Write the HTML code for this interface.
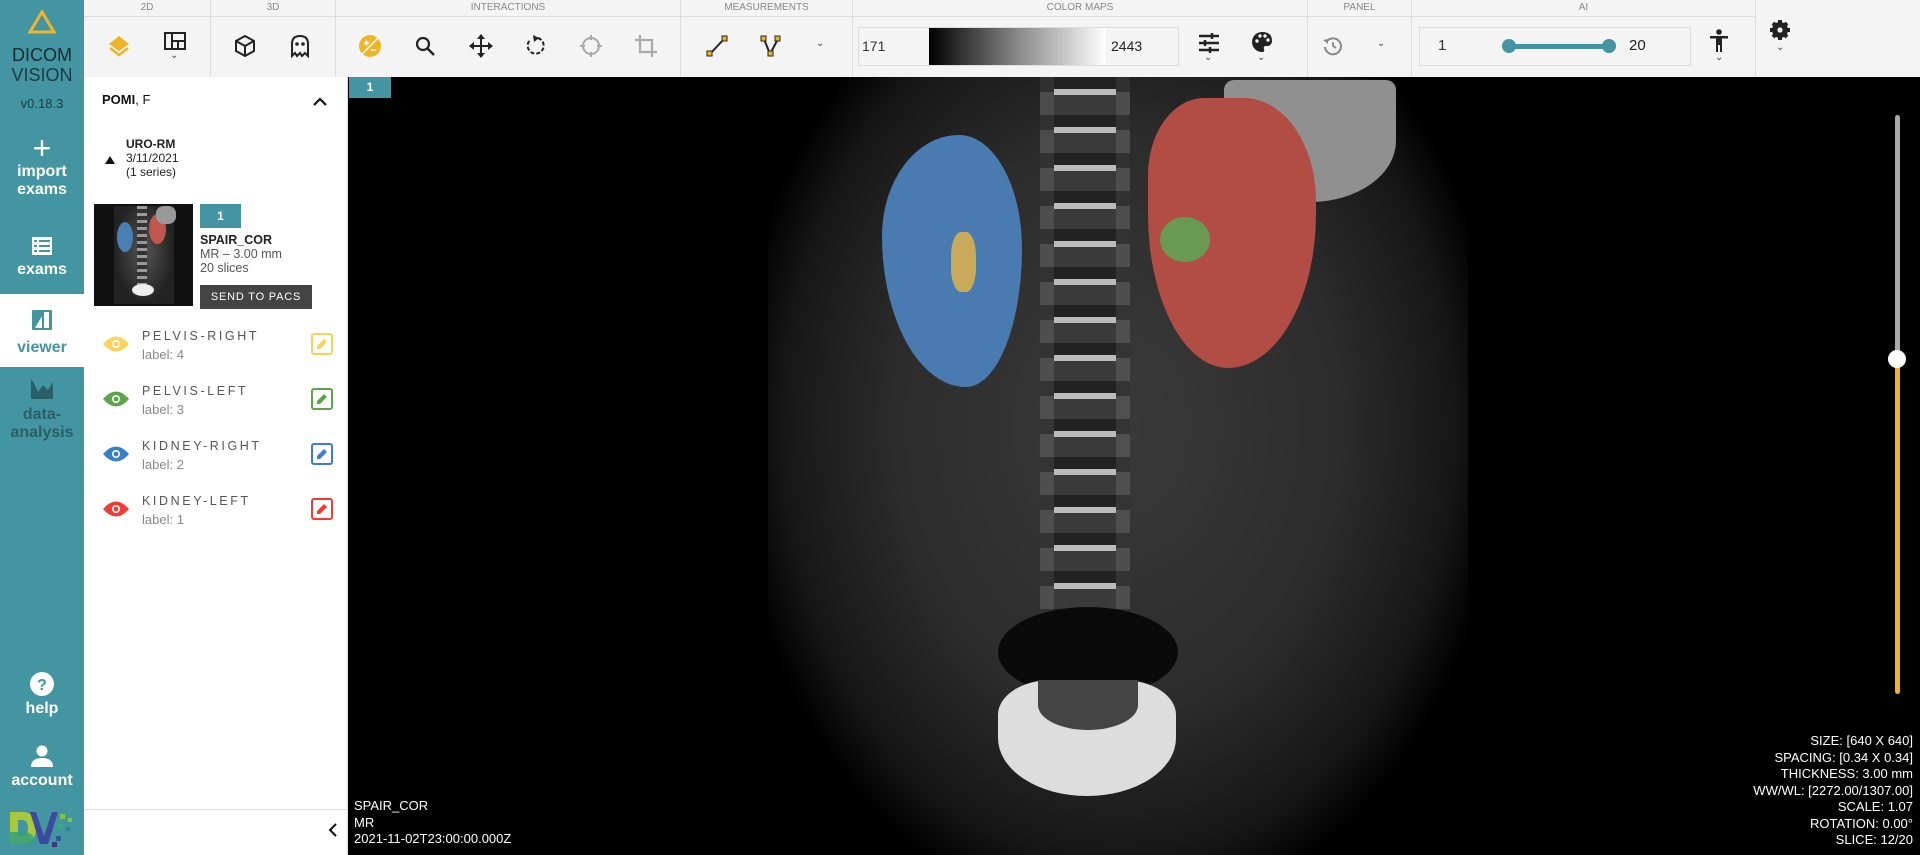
<!DOCTYPE html>
<html><head><meta charset="utf-8"><style>
*{margin:0;padding:0;box-sizing:border-box}
body{width:1920px;height:855px;overflow:hidden;background:#000;font-family:"Liberation Sans",sans-serif;position:relative}
.abs{position:absolute}
#nav{left:0;top:0;width:84px;height:855px;background:#4395a1;color:#fff;text-align:center}
.nt{position:absolute;left:0;width:84px;font-weight:bold;font-size:16px;text-align:center;line-height:18px}
#tb{left:84px;top:0;width:1836px;height:77px;background:#f4f4f4}
.grp{position:absolute;top:0;height:77px;border-right:1px solid #ddd}
.gl{position:absolute;top:0;left:0;right:0;height:17px;border-bottom:1px solid #ddd;font-size:10px;color:#888;text-align:center;line-height:15px}
.chev{position:absolute;font-size:10px;color:#444}
#panel{left:84px;top:77px;width:264px;height:778px;background:#fff;border-right:1px solid #ddd}
.lbl{position:absolute;left:0;width:264px;height:55px}
.lbl .nm{position:absolute;left:58px;top:0;font-size:12.5px;letter-spacing:2.6px;color:#555}
.lbl .sb{position:absolute;left:58px;top:18px;font-size:13px;color:#888}
.ov{color:#fff;font-size:13px;line-height:16.5px}
</style></head><body>

<div id="nav" class="abs">
<svg class="abs" style="left:28px;top:10px" width="28" height="24"><path d="M14 2 L26 22 L2 22 Z" fill="none" stroke="#f0b429" stroke-width="3"/></svg>
<div class="abs" style="left:0;width:84px;top:45px;font-size:18px;color:#1b2a30;line-height:20px">DICOM<br><span style="color:#1b3c44">VISION</span></div>
<div class="abs" style="left:0;width:84px;top:96px;font-size:13px;color:#1b3c44">v0.18.3</div>
<div class="abs" style="left:0;width:84px;top:132px;font-size:32px;line-height:32px">+</div>
<div class="nt" style="top:163px">import<br>exams</div>
<svg class="abs" style="left:31px;top:236px" width="22" height="20"><rect x="1" y="1" width="20" height="18" fill="#fff"/><g fill="#4395a1"><rect x="3" y="4" width="3" height="2"/><rect x="8" y="4" width="11" height="2"/><rect x="3" y="9" width="3" height="2"/><rect x="8" y="9" width="11" height="2"/><rect x="3" y="14" width="3" height="2"/><rect x="8" y="14" width="11" height="2"/></g></svg>
<div class="nt" style="top:261px">exams</div>
<div class="abs" style="left:0;top:294px;width:84px;height:73px;background:#fff"></div>
<svg class="abs" style="left:31px;top:309px" width="22" height="22"><rect x="1" y="1" width="20" height="20" rx="1" fill="#4395a1"/><rect x="13" y="3" width="5" height="16" fill="#fff"/><path d="M4 19 L11 7 L11 19Z" fill="#fff"/></svg>
<div class="nt" style="top:339px;color:#4395a1">viewer</div>
<svg class="abs" style="left:30px;top:378px" width="24" height="22"><path d="M1 1 L1 21 L23 21 L23 4 L18 12 L13 7 L8 14 L4 5 Z" fill="#2a5f6a"/></svg>
<div class="nt" style="top:406px;color:#2a5f6a">data-<br>analysis</div>
<svg class="abs" style="left:30px;top:672px" width="24" height="24"><circle cx="12" cy="12" r="12" fill="#fff"/><text x="12" y="18" font-size="16" font-weight="bold" text-anchor="middle" fill="#4395a1" font-family="Liberation Sans">?</text></svg>
<div class="nt" style="top:700px">help</div>
<svg class="abs" style="left:31px;top:745px" width="22" height="22"><circle cx="11" cy="6" r="5.5" fill="#fff"/><path d="M0 22 Q0 13 11 13 Q22 13 22 22Z" fill="#fff"/></svg>
<div class="nt" style="top:772px">account</div>
<svg class="abs" style="left:8px;top:810px" width="70" height="40"><path d="M2 2 H14 Q28 2 28 18 Q28 34 14 34 H2Z M10 10 V26 H14 Q20 26 20 18 Q20 10 14 10Z" fill="#a7c93a" fill-rule="evenodd"/><path d="M2 22 H14 Q28 22 26 34 H2Z" fill="#2e9e7d" opacity=".8"/><path d="M28 2 L36 26 L44 2 H50 L40 34 H32 L22 2Z" fill="#3b4a9c"/><g fill="#7fc34a"><rect x="52" y="4" width="5" height="5"/><rect x="60" y="8" width="4" height="4"/><rect x="50" y="14" width="5" height="5" fill="#3aa98a"/><rect x="58" y="17" width="4" height="4" fill="#2b8a8a"/><rect x="48" y="26" width="5" height="5" fill="#2b5c8a"/><rect x="44" y="32" width="5" height="5" fill="#3b3a7c"/></g></svg>
</div>

<div id="tb" class="abs">
<div class="grp" style="left:0;width:127px"><div class="gl">2D</div></div>
<div class="grp" style="left:127px;width:125px"><div class="gl">3D</div></div>
<div class="grp" style="left:252px;width:345px"><div class="gl">INTERACTIONS</div></div>
<div class="grp" style="left:597px;width:172px"><div class="gl">MEASUREMENTS</div></div>
<div class="grp" style="left:769px;width:455px"><div class="gl">COLOR MAPS</div></div>
<div class="grp" style="left:1224px;width:104px"><div class="gl">PANEL</div></div>
<div class="grp" style="left:1328px;width:344px"><div class="gl">AI</div></div>
</div>
<svg class="abs" style="left:107px;top:34px" width="24" height="24"><path d="M12 2 L22 10 L12 17 L2 10Z" fill="#f0b429"/><path d="M3 14 L12 21 L21 14" fill="none" stroke="#f0b429" stroke-width="2.5"/></svg>
<svg class="abs" style="left:164px;top:32px" width="22" height="18"><rect x="1" y="1" width="20" height="16" fill="none" stroke="#222" stroke-width="2"/><path d="M8 1V17 M8 9H21 M14 9V17" stroke="#222" stroke-width="2"/></svg>
<div class="chev" style="left:170px;top:50px">&#8964;</div>
<svg class="abs" style="left:234px;top:34px" width="22" height="24"><path d="M11 2 L20 7 V17 L11 22 L2 17 V7Z M2 7 L11 12 L20 7 M11 12 V22" fill="none" stroke="#222" stroke-width="2"/></svg>
<svg class="abs" style="left:289px;top:34px" width="22" height="24"><path d="M3 22 V10 Q3 2 11 2 Q19 2 19 10 V22 L16 19 L13 22 L11 19 L8 22 L6 19Z" fill="none" stroke="#222" stroke-width="2"/><circle cx="8" cy="10" r="1.8" fill="#222"/><circle cx="14" cy="10" r="1.8" fill="#222"/></svg>
<svg class="abs" style="left:358px;top:34px" width="24" height="24"><circle cx="12" cy="12" r="11" fill="#f0b429"/><path d="M4 20 L20 4" stroke="#fff" stroke-width="1.5"/><path d="M6 9h5M8.5 6.5v5M13 16h5" stroke="#fff" stroke-width="1.5"/></svg>
<svg class="abs" style="left:414px;top:35px" width="22" height="22"><circle cx="9" cy="9" r="6" fill="none" stroke="#222" stroke-width="2.2"/><path d="M13 13 L20 20" stroke="#222" stroke-width="2.5"/></svg>
<svg class="abs" style="left:469px;top:34px" width="24" height="24"><path d="M12 1V23 M1 12H23" stroke="#222" stroke-width="2"/><path d="M12 0 L8 5H16Z M12 24 L8 19H16Z M0 12 L5 8V16Z M24 12 L19 8V16Z" fill="#222"/></svg>
<svg class="abs" style="left:524px;top:34px" width="22" height="24"><path d="M14 4 A8 8 0 1 1 6 6" fill="none" stroke="#222" stroke-width="2" stroke-dasharray="4 2"/><path d="M9 1 L15 4 L10 8Z" fill="#222"/></svg>
<svg class="abs" style="left:579px;top:34px" width="24" height="24"><circle cx="12" cy="12" r="8" fill="none" stroke="#aaa" stroke-width="2"/><path d="M12 1V6M12 18V23M1 12H6M18 12H23" stroke="#aaa" stroke-width="2"/></svg>
<svg class="abs" style="left:634px;top:34px" width="24" height="24"><path d="M6 1V18H23 M1 6H18V23" fill="none" stroke="#aaa" stroke-width="2.2"/></svg>
<svg class="abs" style="left:706px;top:35px" width="22" height="22"><path d="M4 19 L18 4" stroke="#222" stroke-width="2"/><rect x="1" y="16" width="5" height="5" fill="#f0b429" stroke="#222"/><rect x="16" y="1" width="5" height="5" fill="#f0b429" stroke="#222"/></svg>
<svg class="abs" style="left:760px;top:35px" width="22" height="22"><path d="M4 4 L10 19 L18 4" fill="none" stroke="#222" stroke-width="2"/><rect x="1" y="1" width="5" height="5" fill="#f0b429" stroke="#222"/><rect x="8" y="16" width="5" height="5" fill="#f0b429" stroke="#222"/><rect x="15" y="1" width="5" height="5" fill="#f0b429" stroke="#222"/></svg>
<div class="chev" style="left:816px;top:38px">&#8964;</div>
<div class="abs" style="left:858px;top:27px;width:321px;height:39px;border:1px solid #ddd;background:#f4f4f4"></div>
<div class="abs" style="left:929px;top:28px;width:177px;height:37px;background:linear-gradient(90deg,#000,#888 50%,#fff)"></div>
<div class="abs" style="left:862px;top:38px;font-size:14px;color:#333">171</div>
<div class="abs" style="left:1111px;top:38px;font-size:14px;color:#222">2443</div>
<svg class="abs" style="left:1198px;top:33px" width="22" height="20"><path d="M1 3H21M1 10H21M1 17H21" stroke="#222" stroke-width="2.5"/><path d="M14 0V6M7 7V13M12 14V20" stroke="#222" stroke-width="2.5"/></svg>
<div class="chev" style="left:1204px;top:52px">&#8964;</div>
<svg class="abs" style="left:1251px;top:31px" width="22" height="22"><path d="M11 1 A10 10 0 0 0 11 21 Q14 21 13 18 Q12 15 15 15 H17 A5 5 0 0 0 21 10 Q21 1 11 1Z" fill="#222"/><circle cx="6" cy="10" r="1.7" fill="#f4f4f4"/><circle cx="9" cy="5" r="1.7" fill="#f4f4f4"/><circle cx="14" cy="5" r="1.7" fill="#f4f4f4"/><circle cx="17" cy="9" r="1.7" fill="#f4f4f4"/></svg>
<div class="chev" style="left:1257px;top:52px">&#8964;</div>
<svg class="abs" style="left:1322px;top:35px" width="22" height="22"><path d="M5 6 A8 8 0 1 1 3 12" fill="none" stroke="#888" stroke-width="2"/><path d="M1 5 L6 4 L6 9Z" fill="#888"/><path d="M11 7V11L14 13" stroke="#888" stroke-width="1.8" fill="none"/></svg>
<div class="chev" style="left:1377px;top:38px">&#8964;</div>
<div class="abs" style="left:1419px;top:27px;width:272px;height:39px;border:1px solid #ddd;background:#f4f4f4"></div>
<div class="abs" style="left:1438px;top:37px;font-size:15px;color:#333">1</div>
<div class="abs" style="left:1512px;top:44px;width:95px;height:5px;background:#4395a1"></div>
<div class="abs" style="left:1502px;top:39px;width:14px;height:14px;border-radius:50%;background:#4395a1"></div>
<div class="abs" style="left:1602px;top:39px;width:14px;height:14px;border-radius:50%;background:#4395a1"></div>
<div class="abs" style="left:1629px;top:37px;font-size:15px;color:#222">20</div>
<svg class="abs" style="left:1709px;top:29px" width="20" height="24"><circle cx="10" cy="3" r="2.8" fill="#222"/><path d="M1 7H19V9.5H13V23H11V16H9V23H7V9.5H1Z" fill="#222"/></svg>
<div class="chev" style="left:1715px;top:52px">&#8964;</div>
<svg class="abs" style="left:1770px;top:20px" width="20" height="20"><circle cx="10" cy="10" r="6" fill="none" stroke="#222" stroke-width="4"/><g stroke="#222" stroke-width="4"><path d="M10 0V20M0 10H20M3 3L17 17M17 3L3 17"/></g><circle cx="10" cy="10" r="2.6" fill="#f4f4f4"/></svg>
<div class="chev" style="left:1776px;top:42px">&#8964;</div>

<div id="panel" class="abs">
<div class="abs" style="left:18px;top:15px;font-size:13px;color:#111"><b>POMI</b>, F</div>
<svg class="abs" style="left:228px;top:20px" width="16" height="10"><path d="M2 8 L8 2 L14 8" fill="none" stroke="#111" stroke-width="2.2"/></svg>
<svg class="abs" style="left:21px;top:79px" width="10" height="8"><path d="M5 0 L10 8 H0Z" fill="#111"/></svg>
<div class="abs" style="left:42px;top:60px;font-size:12px;color:#222;line-height:14px"><b>URO-RM</b><br>3/11/2021<br>(1 series)</div>
<div class="abs" style="left:10px;top:127px;width:99px;height:102px;background:#111;overflow:hidden">
 <div class="abs" style="left:20px;top:2px;width:60px;height:98px;background:radial-gradient(ellipse at 50% 45%,#555,#222 70%)"></div>
 <div class="abs" style="left:43px;top:2px;width:10px;height:80px;background:repeating-linear-gradient(#999 0 3px,#333 3px 7px)"></div>
 <div class="abs" style="left:23px;top:18px;width:16px;height:30px;border-radius:50%;background:#4a7fb5"></div>
 <div class="abs" style="left:55px;top:10px;width:17px;height:30px;border-radius:50%;background:#c0564c"></div>
 <div class="abs" style="left:62px;top:2px;width:20px;height:18px;border-radius:40%;background:#999"></div>
 <div class="abs" style="left:38px;top:80px;width:22px;height:12px;border-radius:50%;background:#eee"></div>
</div>
<div class="abs" style="left:116px;top:127px;width:41px;height:24px;background:#4395a1;color:#fff;font-size:12px;font-weight:bold;text-align:center;line-height:24px">1</div>
<div class="abs" style="left:116px;top:156px;font-size:12.5px;color:#222;line-height:14px"><b>SPAIR_COR</b><br><span style="color:#555">MR – 3.00 mm<br>20 slices</span></div>
<div class="abs" style="left:116px;top:208px;width:112px;height:24px;background:#444;color:#fff;font-size:11px;letter-spacing:.8px;text-align:center;line-height:24px">SEND TO PACS</div>

<div class="lbl" style="top:252px"><svg class="abs" style="left:18px;top:6px" width="28" height="18"><path d="M1 9 Q14 -6 27 9 Q14 24 1 9Z" fill="#fcd25c"/><circle cx="14" cy="9" r="4" fill="#fff"/><circle cx="14" cy="9" r="2.4" fill="#fcd25c"/></svg><div class="nm">PELVIS-RIGHT</div><div class="sb">label: 4</div><svg class="abs" style="left:227px;top:4px" width="22" height="22"><rect x="1" y="1" width="20" height="20" rx="2" fill="none" stroke="#fcd25c" stroke-width="2"/><path d="M6 16 L6 13 L13 6 L16 9 L9 16Z" fill="#fcd25c"/></svg></div>
<div class="lbl" style="top:307px"><svg class="abs" style="left:18px;top:6px" width="28" height="18"><path d="M1 9 Q14 -6 27 9 Q14 24 1 9Z" fill="#5ea44a"/><circle cx="14" cy="9" r="4" fill="#fff"/><circle cx="14" cy="9" r="2.4" fill="#5ea44a"/></svg><div class="nm">PELVIS-LEFT</div><div class="sb">label: 3</div><svg class="abs" style="left:227px;top:4px" width="22" height="22"><rect x="1" y="1" width="20" height="20" rx="2" fill="none" stroke="#5ea44a" stroke-width="2"/><path d="M6 16 L6 13 L13 6 L16 9 L9 16Z" fill="#5ea44a"/></svg></div>
<div class="lbl" style="top:362px"><svg class="abs" style="left:18px;top:6px" width="28" height="18"><path d="M1 9 Q14 -6 27 9 Q14 24 1 9Z" fill="#3a80c9"/><circle cx="14" cy="9" r="4" fill="#fff"/><circle cx="14" cy="9" r="2.4" fill="#3a80c9"/></svg><div class="nm">KIDNEY-RIGHT</div><div class="sb">label: 2</div><svg class="abs" style="left:227px;top:4px" width="22" height="22"><rect x="1" y="1" width="20" height="20" rx="2" fill="none" stroke="#3a80c9" stroke-width="2"/><path d="M6 16 L6 13 L13 6 L16 9 L9 16Z" fill="#3a80c9"/></svg></div>
<div class="lbl" style="top:417px"><svg class="abs" style="left:18px;top:6px" width="28" height="18"><path d="M1 9 Q14 -6 27 9 Q14 24 1 9Z" fill="#ef3d35"/><circle cx="14" cy="9" r="4" fill="#fff"/><circle cx="14" cy="9" r="2.4" fill="#ef3d35"/></svg><div class="nm">KIDNEY-LEFT</div><div class="sb">label: 1</div><svg class="abs" style="left:227px;top:4px" width="22" height="22"><rect x="1" y="1" width="20" height="20" rx="2" fill="none" stroke="#ef3d35" stroke-width="2"/><path d="M6 16 L6 13 L13 6 L16 9 L9 16Z" fill="#ef3d35"/></svg></div>

<div class="abs" style="left:0;top:732px;width:264px;height:1px;background:#ddd"></div>
<svg class="abs" style="left:244px;top:745px" width="10" height="16"><path d="M8 2 L2 8 L8 14" fill="none" stroke="#111" stroke-width="2"/></svg>
</div>

<div class="abs" style="left:348px;top:77px;width:1572px;height:778px;background:#000;overflow:hidden">
 <div class="abs" style="left:420px;top:-20px;width:700px;height:820px;background:radial-gradient(ellipse at 50% 45%,#3a3a3a 0%,#2c2c2c 45%,#161616 68%,#000 78%)"></div>
 <div class="abs" style="left:876px;top:3px;width:172px;height:122px;border-radius:10px 10px 50% 40%;background:#909090"></div>
 <div class="abs" style="left:692px;top:0;width:90px;height:600px;background:repeating-linear-gradient(#333 0 15px,#555 15px 38px);opacity:.8"></div>
 <div class="abs" style="left:706px;top:0;width:62px;height:600px;background:repeating-linear-gradient(#222 0 12px,#bbb 12px 18px,#3a3a3a 18px 38px)"></div>
 <div class="abs" style="left:534px;top:58px;width:140px;height:252px;border-radius:55% 45% 40% 60%/40% 45% 55% 60%;background:#4a7bb0"></div>
 <div class="abs" style="left:800px;top:21px;width:168px;height:270px;border-radius:35% 45% 55% 50%/30% 40% 60% 60%;background:#b14d45"></div>
 <div class="abs" style="left:812px;top:140px;width:50px;height:45px;border-radius:50%;background:#6a9a50"></div>
 <div class="abs" style="left:603px;top:155px;width:25px;height:60px;border-radius:40%;background:#c9aa5a"></div>
 <div class="abs" style="left:650px;top:530px;width:180px;height:90px;border-radius:50%;background:#0a0a0a"></div>
 <div class="abs" style="left:650px;top:603px;width:178px;height:116px;border-radius:30% 30% 50% 50%;background:#ddd"></div>
 <div class="abs" style="left:690px;top:603px;width:100px;height:50px;border-radius:0 0 50% 50%;background:#444"></div>
</div>
<div class="abs" style="left:349px;top:77px;width:42px;height:21px;background:#4395a1;color:#fff;font-size:12px;font-weight:bold;text-align:center;line-height:21px">1</div>
<div class="abs" style="left:1895px;top:115px;width:5px;height:243px;background:#aaa;border-radius:3px"></div>
<div class="abs" style="left:1895px;top:358px;width:5px;height:336px;background:#f0b429;border-radius:3px"></div>
<div class="abs" style="left:1888px;top:350px;width:18px;height:18px;border-radius:50%;background:#fff"></div>
<div class="abs ov" style="left:354px;top:798px">SPAIR_COR<br>MR<br>2021-11-02T23:00:00.000Z</div>
<div class="abs ov" style="right:7px;top:733px;text-align:right">SIZE: [640 X 640]<br>SPACING: [0.34 X 0.34]<br>THICKNESS: 3.00 mm<br>WW/WL: [2272.00/1307.00]<br>SCALE: 1.07<br>ROTATION: 0.00°<br>SLICE: 12/20</div>
</body></html>
